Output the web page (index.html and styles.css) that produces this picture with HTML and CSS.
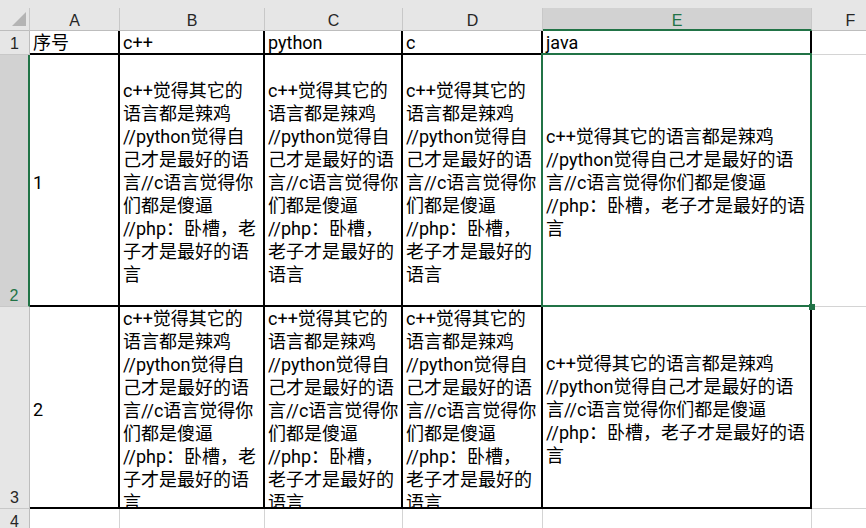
FILE: index.html
```html
<!DOCTYPE html>
<html lang="zh-CN">
<head>
<meta charset="utf-8">
<title>Sheet</title>
<link rel="stylesheet" href="styles.css">
</head>
<body>
<div class="sheet">
  <div class="strip"></div>
  <div class="grid">
    <div class="corner"><svg width="14" height="14" viewBox="0 0 14 14"><polygon points="14,0 14,14 0,14" fill="#b4b4b4"/></svg></div>
    <div class="hd">A</div>
    <div class="hd">B</div>
    <div class="hd">C</div>
    <div class="hd">D</div>
    <div class="hd sel">E</div>
    <div class="hd">F</div>

    <div class="rh">1</div>
    <div class="c b"><span>序号</span></div>
    <div class="c b"><span>c++</span></div>
    <div class="c b"><span>python</span></div>
    <div class="c b"><span>c</span></div>
    <div class="c b"><span>java</span></div>
    <div class="c"></div>

    <div class="rh sel">2</div>
    <div class="c b adj"><span>1</span></div>
    <div class="c b adj"><span>c++觉得其它的<br>语言都是辣鸡<br>//python觉得自<br>己才是最好的语<br>言//c语言觉得你<br>们都是傻逼<br>//php：卧槽，老<br>子才是最好的语<br>言</span></div>
    <div class="c b adj"><span>c++觉得其它的<br>语言都是辣鸡<br>//python觉得自<br>己才是最好的语<br>言//c语言觉得你<br>们都是傻逼<br>//php：卧槽，<br>老子才是最好的<br>语言</span></div>
    <div class="c b adj"><span>c++觉得其它的<br>语言都是辣鸡<br>//python觉得自<br>己才是最好的语<br>言//c语言觉得你<br>们都是傻逼<br>//php：卧槽，<br>老子才是最好的<br>语言</span></div>
    <div class="c b adj selcell"><span>c++觉得其它的语言都是辣鸡<br>//python觉得自己才是最好的语<br>言//c语言觉得你们都是傻逼<br>//php：卧槽，老子才是最好的语<br>言</span></div>
    <div class="c"></div>

    <div class="rh">3</div>
    <div class="c b adj"><span>2</span></div>
    <div class="c b"><span>c++觉得其它的<br>语言都是辣鸡<br>//python觉得自<br>己才是最好的语<br>言//c语言觉得你<br>们都是傻逼<br>//php：卧槽，老<br>子才是最好的语<br>言</span></div>
    <div class="c b"><span>c++觉得其它的<br>语言都是辣鸡<br>//python觉得自<br>己才是最好的语<br>言//c语言觉得你<br>们都是傻逼<br>//php：卧槽，<br>老子才是最好的<br>语言</span></div>
    <div class="c b"><span>c++觉得其它的<br>语言都是辣鸡<br>//python觉得自<br>己才是最好的语<br>言//c语言觉得你<br>们都是傻逼<br>//php：卧槽，<br>老子才是最好的<br>语言</span></div>
    <div class="c b adj"><span>c++觉得其它的语言都是辣鸡<br>//python觉得自己才是最好的语<br>言//c语言觉得你们都是傻逼<br>//php：卧槽，老子才是最好的语<br>言</span></div>
    <div class="c"></div>

    <div class="rh">4</div>
    <div class="c"></div>
    <div class="c"></div>
    <div class="c"></div>
    <div class="c"></div>
    <div class="c"></div>
    <div class="c"></div>
  </div>
</div>
</body>
</html>
```

FILE: styles.css
```css
* { box-sizing: border-box; }

body {
  margin: 0;
  background: #fff;
  font-family: Roboto, "Noto Sans CJK SC", sans-serif;
}

.sheet {
  width: 866px;
  height: 528px;
  overflow: hidden;
  display: flex;
  flex-direction: column;
  background: #fff;
}

.strip {
  flex: none;
  height: 8px;
  background: #e6e6e6;
}

.grid {
  flex: none;
  display: grid;
  grid-template-columns: 30px 90px 145px 138px 140px 269px 78px;
  grid-template-rows: 23px 24px 252px 202px 24px;
}

.corner {
  background: #e6e6e6;
  border-right: 1px solid #c8c8c8;
  border-bottom: 1px solid #bdbdbd;
  display: flex;
  align-items: flex-end;
  justify-content: flex-end;
  padding: 0 3px 4px 0;
}

.corner svg { display: block; }

.hd {
  background: #e6e6e6;
  border-right: 1px solid #c8c8c8;
  border-bottom: 1px solid #bdbdbd;
  text-align: center;
  font-family: "Liberation Sans", sans-serif;
  font-size: 16px;
  line-height: 20px;
  padding-top: 3px;
  color: #262626;
}

.hd.sel {
  background: #d2d2d2;
  border-bottom: 2px solid #217346;
  color: #217346;
}

.rh {
  background: #e6e6e6;
  border-right: 1px solid #bdbdbd;
  border-bottom: 1px solid #c8c8c8;
  display: flex;
  align-items: flex-end;
  justify-content: center;
  font-family: "Liberation Sans", sans-serif;
  font-size: 16px;
  line-height: 20px;
  color: #262626;
  overflow: hidden;
}

.rh.sel {
  background: #d2d2d2;
  border-right: 2px solid #217346;
  color: #217346;
}

.c {
  border-right: 1px solid #d4d4d4;
  border-bottom: 1px solid #d4d4d4;
  display: flex;
  flex-direction: column;
  padding: 0 3px;
  overflow: hidden;
  font-size: 18px;
  line-height: 23px;
  white-space: nowrap;
  color: #000;
}

.c > span { margin: auto 0; }

.b {
  border-right: 2px solid #000;
  border-bottom: 2px solid #000;
}

.adj { padding-top: 5px; }

.selcell {
  position: relative;
  overflow: visible;
  border-color: #217346;
}

.selcell::after {
  content: "";
  position: absolute;
  top: -2px;
  left: -2px;
  right: -2px;
  bottom: -2px;
  border: 2px solid #217346;
  pointer-events: none;
}

.selcell::before {
  content: "";
  position: absolute;
  width: 6px;
  height: 6px;
  right: -5px;
  bottom: -5px;
  background: #217346;
  z-index: 1;
}
```
